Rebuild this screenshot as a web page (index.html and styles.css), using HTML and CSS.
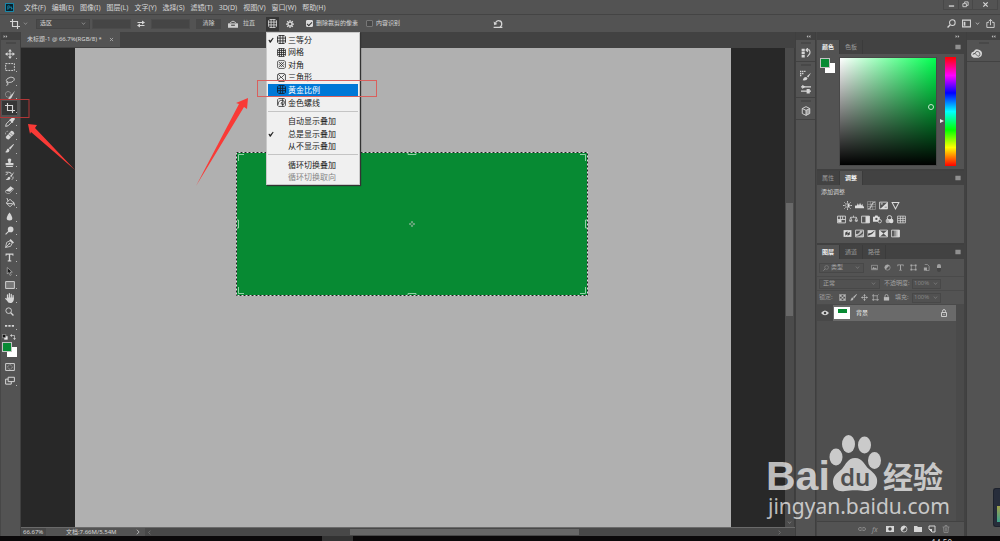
FILE: index.html
```html
<!DOCTYPE html>
<html lang="zh-CN">
<head>
<meta charset="utf-8">
<title>未标题-1 @ 66.7%(RGB/8)</title>
<link rel="stylesheet" href="styles.css">
</head>
<body>
<svg class="defs" aria-hidden="true">
  <symbol id="crop" viewBox="0 0 16 16"><path d="M4 0v12h12M0 4h12v12" fill="none" stroke="currentColor" stroke-width="1.8"/></symbol>
  <symbol id="chev" viewBox="0 0 16 16"><path d="M3 5l5 6 5-6" fill="none" stroke="currentColor" stroke-width="2.200"/></symbol>
  <symbol id="right" viewBox="0 0 16 16"><path d="M5 2l6 6-6 6" fill="none" stroke="currentColor" stroke-width="2"/></symbol>
  <symbol id="left" viewBox="0 0 16 16"><path d="M11 2L5 8l6 6" fill="none" stroke="currentColor" stroke-width="2"/></symbol>
  <symbol id="dright" viewBox="0 0 16 16"><path d="M2 3l5 5-5 5zM9 3l5 5-5 5z" fill="currentColor"/></symbol>
  <symbol id="dleft" viewBox="0 0 16 16"><path d="M7 3L2 8l5 5zM14 3L9 8l5 5z" fill="currentColor"/></symbol>
  <symbol id="swap" viewBox="0 0 16 16"><path d="M1 5h10M5 11h10" stroke="currentColor" stroke-width="2"/><path d="M10 1l6 4-6 4zM6 7l-6 4 6 4z" fill="currentColor"/></symbol>
  <symbol id="level" viewBox="0 0 16 16"><path d="M0 7h16v7H0z" fill="currentColor"/><path d="M3 7q5-7 10 0" fill="none" stroke="currentColor" stroke-width="1.5"/><path d="M5 9h6v2H5z" fill="#535353"/></symbol>
  <symbol id="grid" viewBox="0 0 16 16"><path d="M3 1h10l2 2v10l-2 2H3l-2-2V3zM5.500 0v16M10.500 0v16M0 5.500h16M0 10.500h16" fill="none" stroke="currentColor" stroke-width="1.500"/></symbol>
  <symbol id="mesh" viewBox="0 0 16 16"><path d="M3 1h10l2 2v10l-2 2H3l-2-2V3zM4.500 1v14M8 1v14M11.500 1v14M1 4.500h14M1 8h14M1 11.500h14" fill="none" stroke="currentColor" stroke-width="1.400"/></symbol>
  <symbol id="diag" viewBox="0 0 16 16"><path d="M3 1h10l2 2v10l-2 2H3l-2-2V3zM3 3l10 10M13 3L3 13M8 4l4 4-4 4-4-4z" fill="none" stroke="currentColor" stroke-width="1.200"/></symbol>
  <symbol id="tri" viewBox="0 0 16 16"><path d="M3 1h10l2 2v10l-2 2H3l-2-2V3zM2 2l12 12M8 8l6-6M2 12l5-5" fill="none" stroke="currentColor" stroke-width="1.300"/></symbol>
  <symbol id="golden" viewBox="0 0 16 16"><path d="M3 1h10l2 2v10l-2 2H3l-2-2V3zM6 0v16M10 0v16M0 6h16M0 10h16" fill="none" stroke="currentColor" stroke-width="1.700"/></symbol>
  <symbol id="spiral" viewBox="0 0 16 16"><path d="M3 1h10l2 2v10l-2 2H3l-2-2V3zM2 12Q2 4 9 4q5 0 4 5t-5 2q-2-2 1-4M10 1v14" fill="none" stroke="currentColor" stroke-width="1.300"/></symbol>
  <symbol id="gear" viewBox="0 0 16 16"><circle cx="8" cy="8" r="4.200" fill="none" stroke="currentColor" stroke-width="3"/><path d="M8 0v3M8 13v3M0 8h3M13 8h3M2.300 2.300l2 2M11.700 11.700l2 2M2.300 13.700l2-2M11.700 4.300l2-2" stroke="currentColor" stroke-width="2.500"/></symbol>
  <symbol id="reset" viewBox="0 0 16 16"><path d="M4 6q2-4 5-3.500 5 .5 5 5t-3 5" fill="none" stroke="currentColor" stroke-width="2"/><path d="M1 4l1 6 5-2zM1 12.500h14v2H1z" fill="currentColor"/></symbol>
  <symbol id="search" viewBox="0 0 16 16"><circle cx="9.500" cy="6.500" r="5" fill="none" stroke="currentColor" stroke-width="1.800"/><path d="M6 10l-5 5" stroke="currentColor" stroke-width="2.500"/></symbol>
  <symbol id="layout" viewBox="0 0 16 16"><path d="M1 2h14v12H1z" fill="none" stroke="currentColor" stroke-width="1.800"/><path d="M3 5h3v7H3z" fill="currentColor"/></symbol>
  <symbol id="share" viewBox="0 0 16 16"><path d="M5 6H1.500v9h13V6H11M8 11V1M4.500 4L8 1l3.500 3" fill="none" stroke="currentColor" stroke-width="1.600"/></symbol>
  <symbol id="min" viewBox="0 0 16 16"><path d="M2 10h12v3H2z" fill="currentColor"/></symbol>
  <symbol id="restore" viewBox="0 0 16 16"><path d="M2 6h8v7H2zM6 5V2h8v8h-4" fill="none" stroke="currentColor" stroke-width="2"/></symbol>
  <symbol id="close" viewBox="0 0 16 16"><path d="M3 3l10 10M13 3L3 13" stroke="currentColor" stroke-width="2.800"/></symbol>
  <symbol id="check" viewBox="0 0 16 16"><path d="M1 8l3-1 2 3 7-8 2 1-8 12H5z" fill="currentColor"/></symbol>
  <symbol id="move" viewBox="0 0 16 16"><path d="M8 2v12M2 8h12" stroke="currentColor" stroke-width="1.600"/><path d="M8 0l3 4H5zM8 16l3-4H5zM0 8l4-3v6zM16 8l-4-3v6z" fill="currentColor"/></symbol>
  <symbol id="marquee" viewBox="0 0 16 16"><path d="M1 2.500h14v11H1z" fill="none" stroke="currentColor" stroke-width="1.500" stroke-dasharray="3 1.500"/></symbol>
  <symbol id="lasso" viewBox="0 0 16 16"><path d="M4 10Q0 7 4 4q6-4 10-1 3 4-4 7-5 1-7-1-1 3 2 3 0 3-3 3" fill="none" stroke="currentColor" stroke-width="1.400"/></symbol>
  <symbol id="quick" viewBox="0 0 16 16"><circle cx="5" cy="7" r="4.500" fill="none" stroke="currentColor" stroke-dasharray="2 1"/><path d="M16 1L9 9l-4 5q5 1 6-3z" fill="currentColor"/></symbol>
  <symbol id="dropper" viewBox="0 0 16 16"><path d="M1 15l1-4 6-6 3 3-6 6z" fill="none" stroke="currentColor" stroke-width="1.500"/><path d="M7 4l2-1 3-3q3 0 4 3l-3 4v2h-2z" fill="currentColor"/></symbol>
  <symbol id="heal" viewBox="0 0 16 16"><path d="M1 11l9-10q4 0 5 5l-9 9q-4 0-5-4z" fill="currentColor"/><path d="M5 6l5 5M8 4l4 4M8 9l-1-1" stroke="#535353"/><path d="M1 7q-1-5 4-5" fill="none" stroke="currentColor" stroke-dasharray="2 1"/></symbol>
  <symbol id="brush" viewBox="0 0 16 16"><path d="M15 0L7 7l2 3 7-9zM6 8q-3 0-3 3-1 3-3 3 7 3 8-3z" fill="currentColor"/></symbol>
  <symbol id="stamp" viewBox="0 0 16 16"><path d="M6 7Q3 1 8 1t2 6v2h5v4H1V9h5zM2 14h12v2H2z" fill="currentColor"/></symbol>
  <symbol id="history" viewBox="0 0 16 16"><path d="M15 1L8 8l2 2zM7 9q-3 0-3 3l-3 2q6 2 8-3z" fill="currentColor"/><path d="M1 2h5q4 0 4 3M13 9q0 4-2 5M1 6l4-2" fill="none" stroke="currentColor" stroke-width="1.400"/></symbol>
  <symbol id="eraser" viewBox="0 0 16 16"><path d="M1 10l9-8 5 4-6 6z" fill="currentColor"/><path d="M1 10v3l3 2h4l7-7V6" fill="none" stroke="currentColor"/></symbol>
  <symbol id="bucket" viewBox="0 0 16 16"><path d="M2 8l6-6 6 6-6 6zM5 5L3 0M3 9h9" fill="none" stroke="currentColor" stroke-width="1.500"/><path d="M13 5q4 3 2 8-2-2-2-8z" fill="currentColor"/></symbol>
  <symbol id="drop" viewBox="0 0 16 16"><path d="M8 1q10 14 0 14T8 1z" fill="currentColor"/></symbol>
  <symbol id="dodge" viewBox="0 0 16 16"><circle cx="10" cy="6" r="5" fill="currentColor"/><path d="M7 9l-6 6" stroke="currentColor" stroke-width="2"/></symbol>
  <symbol id="pen" viewBox="0 0 16 16"><path d="M1 15l2-9 6-3 4 4-3 6zM1 15l6-6" fill="none" stroke="currentColor" stroke-width="1.500"/><circle cx="8" cy="8" r="1.500" fill="currentColor"/><path d="M10 0l6 6-2 2-6-6z" fill="currentColor"/></symbol>
  <symbol id="type" viewBox="0 0 16 16"><path d="M1 1h14v4h-1.500L13 3H9.200v10l2 .5V15H4.800v-1.500l2-.5V3H3l-.5 2H1z" fill="currentColor"/></symbol>
  <symbol id="arrow" viewBox="0 0 16 16"><path d="M4 1v11l3-2 2 5 2-1-2-5h4z" fill="#1c1c1c" stroke="currentColor"/></symbol>
  <symbol id="rect" viewBox="0 0 16 16"><path d="M1 2.500h14v11H1z" fill="#777" stroke="currentColor" stroke-width="1.500"/></symbol>
  <symbol id="hand" viewBox="0 0 16 16"><path d="M4 9V3M7 8V1M10 8V2M13 9V4" stroke="currentColor" stroke-width="2" stroke-linecap="round"/><path d="M3 7h11v4q-1 5-6 5-3 0-5-4L0 9q1-2 3 0z" fill="currentColor"/></symbol>
  <symbol id="zoom" viewBox="0 0 16 16"><circle cx="6.500" cy="6.500" r="5" fill="none" stroke="currentColor" stroke-width="1.600"/><path d="M10 10l5 5" stroke="currentColor" stroke-width="2.500"/></symbol>
  <symbol id="dots" viewBox="0 0 16 16"><path d="M0 7h4v3H0zM6 7h4v3H6zM12 7h4v3h-4z" fill="currentColor"/></symbol>
  <symbol id="defcol" viewBox="0 0 16 16"><path d="M6 6h9v9H6z" fill="#eee"/><path d="M1 1h9v9H1z" fill="#111" stroke="#ccc" stroke-width="1.500"/></symbol>
  <symbol id="swapcol" viewBox="0 0 16 16"><path d="M3 4h9v9" fill="none" stroke="currentColor" stroke-width="1.800"/><path d="M5 0v8L0 4zM8 11h8l-4 5z" fill="currentColor"/></symbol>
  <symbol id="mask" viewBox="0 0 16 16"><path d="M1 2.500h14v11H1z" fill="none" stroke="currentColor" stroke-width="1.500"/><circle cx="8" cy="8" r="3.500" fill="none" stroke="currentColor" stroke-dasharray="1.500 1"/></symbol>
  <symbol id="screen" viewBox="0 0 16 16"><path d="M5 2h10v7H5zM5 5H1v8h9V9" fill="none" stroke="currentColor" stroke-width="1.600"/></symbol>
  <symbol id="panelhist" viewBox="0 0 16 16"><path d="M1 1h5v4H1zM1 6h5v4H1zM1 11h5v4H1z" fill="currentColor"/><path d="M9 3h4q2 2 1 6l-4 5M11 0L8 3l3 3" fill="none" stroke="currentColor" stroke-width="1.800"/></symbol>
  <symbol id="presets" viewBox="0 0 16 16"><path d="M0 1h2v2H0zM3 1h2v2H3zM6 1h2v2H6zM0 4h2v2H0zM3 4h2v2H3zM0 7h2v2H0zM16 4l-6 5 2 2zM9 10q-4 0-5 5 6 1 7-3z" fill="currentColor"/></symbol>
  <symbol id="sliders" viewBox="0 0 16 16"><path d="M0 4.500h16M0 11.500h16" stroke="currentColor" stroke-width="2"/><path d="M2 1l5 3.500L2 8zM9 8h5v7H9z" fill="currentColor"/></symbol>
  <symbol id="cube" viewBox="0 0 16 16"><path d="M8 1l6 3v8l-6 3-6-3V4zM2 4l6 3 6-3M8 7v8" fill="none" stroke="currentColor" stroke-width="1.500"/><path d="M8 7l6-3v8l-6 3z" fill="currentColor" opacity=".6"/></symbol>
  <symbol id="cc" viewBox="0 0 16 16"><path d="M4 14Q0 13 0 9.500 0 6 4 5q2-4 6-3 6 1 6 6t-5 6z" fill="currentColor"/><path d="M3 10q0-3 3-2l4 4q3 0 3-3t-3-4-5 4" fill="none" stroke="#535353" stroke-width="1.200"/></symbol>
  <symbol id="sun" viewBox="0 0 16 16"><circle cx="8" cy="8" r="3.500" fill="none" stroke="currentColor"/><path d="M8 4.500a3.500 3.500 0 010 7z" fill="currentColor"/><path d="M8 0v3M8 13v3M0 8h3M13 8h3M2.500 2.500l2 2M11.500 11.500l2 2M2.500 13.500l2-2M11.500 4.500l2-2" stroke="currentColor" stroke-width="1.500"/></symbol>
  <symbol id="levels" viewBox="0 0 16 16"><path d="M0 13V9l2-2 1 2 2-5 2 4 2-5 2 5 2-3 1 4 2 1v3z" fill="currentColor"/></symbol>
  <symbol id="curves" viewBox="0 0 16 16"><path d="M1 1h14v14H1zM1 6h14M1 10h14M6 1v14M10 1v14" fill="none" stroke="currentColor" opacity=".6"/><path d="M2 14Q8 13 8 8t6-6" fill="none" stroke="currentColor" stroke-width="1.500"/></symbol>
  <symbol id="expo" viewBox="0 0 16 16"><path d="M1 2h14v12H1z" fill="none" stroke="currentColor" stroke-width="1.500"/><path d="M15 2v12H2z" fill="currentColor"/><path d="M3 5h4M5 3v4" stroke="currentColor"/><path d="M10 11h4" stroke="#444"/></symbol>
  <symbol id="vib" viewBox="0 0 16 16"><path d="M2 2.500h12L8 14z" fill="none" stroke="currentColor" stroke-width="1.800"/></symbol>
  <symbol id="hue" viewBox="0 0 16 16"><path d="M1 2h14v12H1zM1 8h14M6 2v6M10 2v6" fill="none" stroke="currentColor" stroke-width="1.500"/><path d="M2 9h6v4H2z" fill="currentColor"/></symbol>
  <symbol id="scale" viewBox="0 0 16 16"><path d="M3 4h10M8 1v3M3 4l-2 6h4zM13 4l-2 6h4z" fill="none" stroke="currentColor" stroke-width="1.300"/><path d="M0 10h6q-3 4-6 0zM10 10h6q-3 4-6 0z" fill="currentColor"/></symbol>
  <symbol id="bw" viewBox="0 0 16 16"><path d="M1 2h14v12H1z" fill="none" stroke="currentColor" stroke-width="1.500"/><path d="M8 2h7v12H8z" fill="currentColor"/></symbol>
  <symbol id="photo" viewBox="0 0 16 16"><path d="M0 3h3l1-2h4l1 2h3v9H0z" fill="currentColor"/><circle cx="6" cy="7" r="2" fill="#535353"/><circle cx="12" cy="11" r="3" fill="#535353" stroke="currentColor" stroke-width="1.400"/></symbol>
  <symbol id="mixer" viewBox="0 0 16 16"><circle cx="8" cy="5" r="4" fill="none" stroke="currentColor" stroke-width="1.600"/><circle cx="5" cy="10.500" r="4" fill="currentColor" opacity=".7"/><circle cx="11" cy="10.500" r="4" fill="currentColor"/></symbol>
  <symbol id="table" viewBox="0 0 16 16"><path d="M1 2h14v12H1zM1 6h14M1 10h14M6 2v12M10.500 2v12" fill="none" stroke="currentColor" stroke-width="1.300"/></symbol>
  <symbol id="invert" viewBox="0 0 16 16"><path d="M1 2h14v12H1z" fill="currentColor"/><path d="M4 12V6l4-2v4l4-3v5l-4 2V9z" fill="#444"/></symbol>
  <symbol id="poster" viewBox="0 0 16 16"><path d="M1 2h14v12H1z" fill="none" stroke="currentColor" stroke-width="1.500"/><path d="M1 9Q8 9 9 3h5Q12 9 2 13z" fill="currentColor" opacity=".8"/><path d="M5 14l10-6v6z" fill="currentColor" opacity=".6"/></symbol>
  <symbol id="thresh" viewBox="0 0 16 16"><path d="M1 2h14v12H1z" fill="currentColor"/><path d="M2 8l5-1 6-4h1L9 9l-7 3z" fill="#444"/></symbol>
  <symbol id="sel" viewBox="0 0 16 16"><path d="M1 2h14v12H1z" fill="none" stroke="currentColor" stroke-width="1.500"/><path d="M1 2l7 6 7-6v12L8 8l-7 6z" fill="currentColor"/></symbol>
  <symbol id="gradmap" viewBox="0 0 16 16"><path d="M1 2h14v12H1z" fill="none" stroke="currentColor" stroke-width="1.500"/><path d="M5 2h3v12H5z" fill="currentColor" opacity=".4"/><path d="M8 2h3v12H8z" fill="currentColor" opacity=".7"/><path d="M11 2h4v12h-4z" fill="currentColor"/></symbol>
  <symbol id="image" viewBox="0 0 16 16"><path d="M1 3h14v10H1z" fill="none" stroke="currentColor" stroke-width="1.500"/><path d="M2 12l4-6 3 4 2-2 3 4z" fill="currentColor"/></symbol>
  <symbol id="half" viewBox="0 0 16 16"><circle cx="8" cy="8" r="6" fill="none" stroke="currentColor" stroke-width="1.500"/><path d="M3.700 12.300a6 6 0 018.600-8.600z" fill="currentColor"/></symbol>
  <symbol id="shape" viewBox="0 0 16 16"><path d="M3 3h10v10H3z" fill="none" stroke="currentColor" stroke-width="1.500"/><path d="M1 1h4v4H1zM11 1h4v4h-4zM1 11h4v4H1zM11 11h4v4h-4z" fill="currentColor"/></symbol>
  <symbol id="smart" viewBox="0 0 16 16"><path d="M4 1h6l4 4v10H7" fill="none" stroke="currentColor" stroke-width="1.500"/><path d="M2 8h7v7H2z" fill="currentColor"/></symbol>
  <symbol id="checker" viewBox="0 0 16 16"><path d="M1 1h14v14H1z" fill="none" stroke="currentColor" stroke-width="1.500"/><path d="M2 2h4v4H2zM10 2h4v4h-4zM6 6h4v4H6zM2 10h4v4H2zM10 10h4v4h-4z" fill="currentColor"/></symbol>
  <symbol id="board" viewBox="0 0 16 16"><path d="M3 0v16M0 4h12l3-3M12 4v12M0 13h16" fill="none" stroke="currentColor" stroke-width="1.500"/></symbol>
  <symbol id="lock" viewBox="0 0 16 16"><path d="M2 7h12v8H2z" fill="currentColor"/><path d="M4.500 7V5q0-4 3.500-4t3.500 4v2" fill="none" stroke="currentColor" stroke-width="1.800"/></symbol>
  <symbol id="olock" viewBox="0 0 16 16"><path d="M3 7h10v8H3zM5 7V5q0-4 3-4t3 4v2M8 10v2" fill="none" stroke="currentColor" stroke-width="2"/></symbol>
  <symbol id="eye" viewBox="0 0 16 16"><path d="M0 8q8-10 16 0-8 9-16 0z" fill="currentColor"/><circle cx="8" cy="8" r="2.500" fill="#444"/></symbol>
  <symbol id="link" viewBox="0 0 16 16"><path d="M7 5H4q-3 0-3 3t3 3h3M9 5h3q3 0 3 3t-3 3H9M5 8h6" fill="none" stroke="currentColor" stroke-width="1.600"/></symbol>
  <symbol id="lmask" viewBox="0 0 16 16"><path d="M0 2h16v12H0z" fill="currentColor"/><circle cx="8" cy="8" r="3.500" fill="#444"/></symbol>
  <symbol id="folder" viewBox="0 0 16 16"><path d="M0 2h6l2 2h8v10H0z" fill="currentColor"/></symbol>
  <symbol id="new" viewBox="0 0 16 16"><path d="M2 2h12v12H8L2 8z" fill="none" stroke="currentColor" stroke-width="2"/><path d="M2 8h6v6z" fill="currentColor"/></symbol>
  <symbol id="trash" viewBox="0 0 16 16"><path d="M1 4h14M6 4V1h4v3M3 4l1 11h8l1-11M6.500 6v7M9.500 6v7" fill="none" stroke="currentColor" stroke-width="1.500"/></symbol>
  <symbol id="list" viewBox="0 0 16 16"><path d="M1 2h14v12H1z" fill="currentColor"/></symbol>
</svg>

<header class="menubar">
  <svg class="ps" viewBox="0 0 16 16" role="img" aria-label="Ps"><rect x="1" y="1" width="14" height="14" fill="#07202c" stroke="#1690b5" stroke-width="1.600"/><path d="M5 12V5h2q2 0 2 2T7 9H5M12.500 7.500q-2-1-2 .5t2 1.500-2 1.500" fill="none" stroke="#20a8d2" stroke-width="1.200"/></svg>
  <nav class="menus">
    <button>文件(F)</button><button>编辑(E)</button><button>图像(I)</button><button>图层(L)</button><button>文字(Y)</button><button>选择(S)</button><button>滤镜(T)</button><button>3D(D)</button><button>视图(V)</button><button>窗口(W)</button><button>帮助(H)</button>
  </nav>
  <div class="winctl">
    <button aria-label="最小化"><svg class="i7"><use href="#min"/></svg></button>
    <button aria-label="还原"><svg class="i7"><use href="#restore"/></svg></button>
    <button class="wide" aria-label="关闭"><svg class="i7"><use href="#close"/></svg></button>
  </div>
</header>

<section class="options">
  <button class="current" aria-label="裁剪工具"><svg class="i10"><use href="#crop"/></svg><svg class="i5"><use href="#chev"/></svg></button>
  <div class="ratio">
    <div class="pick wide"><select aria-label="预设"><option>选区</option></select><svg class="i5"><use href="#chev"/></svg></div>
    <input class="num" type="text" aria-label="宽度">
  </div>
  <button class="plain" aria-label="互换"><svg class="i8"><use href="#swap"/></svg></button>
  <input class="num" type="text" aria-label="高度">
  <button class="clear">清除</button>
  <button class="straight"><svg class="i10"><use href="#level"/></svg>拉直</button>
  <div class="overlay">
    <button class="gridbtn" aria-label="叠加选项"><svg class="i9"><use href="#grid"/></svg></button>
    <div class="dropdown" role="menu">
      <button><svg class="i6"><use href="#check"/></svg><svg class="i9"><use href="#grid"/></svg>三等分</button>
      <button><i></i><svg class="i9"><use href="#mesh"/></svg>网格</button>
      <button><i></i><svg class="i9"><use href="#diag"/></svg>对角</button>
      <button><i></i><svg class="i9"><use href="#tri"/></svg>三角形</button>
      <button class="hot"><i></i><svg class="i9"><use href="#golden"/></svg>黄金比例</button>
      <button><i></i><svg class="i9"><use href="#spiral"/></svg>金色螺线</button>
      <hr>
      <button><i></i><i></i>自动显示叠加</button>
      <button><svg class="i6"><use href="#check"/></svg><i></i>总是显示叠加</button>
      <button><i></i><i></i>从不显示叠加</button>
      <hr>
      <button><i></i><i></i>循环切换叠加</button>
      <button disabled><i></i><i></i>循环切换取向</button>
    </div>
  </div>
  <button class="plain gear" aria-label="设置"><svg class="i8"><use href="#gear"/></svg></button>
  <label class="tick"><input type="checkbox" checked>删除裁剪的像素</label>
  <label class="tick"><input type="checkbox">内容识别</label>
  <button class="plain reset" aria-label="复位"><svg class="i10"><use href="#reset"/></svg></button>
  <div class="optright">
    <button class="plain" aria-label="搜索"><svg class="i9"><use href="#search"/></svg></button>
    <button class="plain duo" aria-label="工作区"><svg class="i9"><use href="#layout"/></svg><svg class="i5"><use href="#chev"/></svg></button>
    <button class="plain" aria-label="共享"><svg class="i9"><use href="#share"/></svg></button>
  </div>
</section>

<main class="work">
  <aside class="tools">
    <div class="strip start"><svg class="i5"><use href="#dright"/></svg></div>
    <div class="grip"></div>
    <div class="toollist">
      <button aria-label="移动"><svg class="i10"><use href="#move"/></svg></button>
      <button aria-label="选框"><svg class="i10"><use href="#marquee"/></svg></button>
      <button aria-label="套索"><svg class="i10"><use href="#lasso"/></svg></button>
      <button aria-label="快速选择"><svg class="i10"><use href="#quick"/></svg></button>
      <button class="on" aria-label="裁剪"><svg class="i10"><use href="#crop"/></svg></button>
      <button aria-label="吸管"><svg class="i10"><use href="#dropper"/></svg></button>
      <button aria-label="修复"><svg class="i10"><use href="#heal"/></svg></button>
      <button aria-label="画笔"><svg class="i9"><use href="#brush"/></svg></button>
      <button aria-label="图章"><svg class="i9"><use href="#stamp"/></svg></button>
      <button aria-label="历史记录画笔"><svg class="i10"><use href="#history"/></svg></button>
      <button aria-label="橡皮擦"><svg class="i9"><use href="#eraser"/></svg></button>
      <button aria-label="油漆桶"><svg class="i10"><use href="#bucket"/></svg></button>
      <button aria-label="模糊"><svg class="i9"><use href="#drop"/></svg></button>
      <button aria-label="减淡"><svg class="i9"><use href="#dodge"/></svg></button>
      <button aria-label="钢笔"><svg class="i9"><use href="#pen"/></svg></button>
      <button aria-label="文字"><svg class="i9"><use href="#type"/></svg></button>
      <button aria-label="路径选择"><svg class="i9"><use href="#arrow"/></svg></button>
      <button aria-label="矩形"><svg class="i10"><use href="#rect"/></svg></button>
      <button aria-label="抓手"><svg class="i10"><use href="#hand"/></svg></button>
      <button class="single" aria-label="缩放"><svg class="i9"><use href="#zoom"/></svg></button>
      <button aria-label="更多"><svg class="i9"><use href="#dots"/></svg></button>
    </div>
    <div class="colmini"><svg class="i6"><use href="#defcol"/></svg><svg class="i6"><use href="#swapcol"/></svg></div>
    <div class="swatch"><span class="bg"></span><span class="fg"></span></div>
    <div class="modes">
      <button class="single" aria-label="快速蒙版"><svg class="i10"><use href="#mask"/></svg></button>
      <button aria-label="屏幕模式"><svg class="i10"><use href="#screen"/></svg></button>
    </div>
  </aside>

  <section class="doc">
    <div class="tabs"><div class="tab">未标题-1 @ 66.7%(RGB/8) * <button class="plain" aria-label="关闭文档"><svg class="i5"><use href="#close"/></svg></button></div></div>
    <div class="stage">
      <div class="canvas">
        <svg class="selection" viewBox="0 0 352 144">
          <rect x="0.500" y="0.500" width="351" height="143" fill="#078a33" stroke="#dedede"/>
          <rect x="0.500" y="0.500" width="351" height="143" fill="none" stroke="#222" stroke-dasharray="2 2"/>
          <path d="M2.500 9V2.500H8M344 2.500h5.500V9M2.500 135v6.500H8M344 141.500h5.500V135M172 1v1.500h8V1M172 143v-1.500h8V143M1 68h1.500v8H1M351 68h-1.500v8h1.500" fill="none" stroke="#8fd0a4"/>
          <path d="M176 69v2M176 73v2M173 72h2M177 72h2" stroke="#a7c9b0"/><circle cx="176" cy="72" r="1.500" fill="none" stroke="#6fa380"/>
        </svg>
      </div>
    </div>
    <div class="vscroll"><span></span><svg class="i5"><use href="#chev"/></svg></div>
    <footer class="status">
      <span class="pct">66.67%</span>
      <span class="info">文档:7.66M/5.54M</span>
      <svg class="i6"><use href="#right"/></svg>
      <div class="hscroll"><svg class="i5"><use href="#left"/></svg><span></span><svg class="i5"><use href="#right"/></svg></div>
    </footer>
  </section>

  <aside class="dock">
    <div class="strip"><svg class="i5"><use href="#dleft"/></svg></div>
    <div class="group"><div class="grip"></div><button aria-label="历史记录"><svg class="i10"><use href="#panelhist"/></svg></button></div>
    <div class="group"><div class="grip"></div><button aria-label="画笔预设"><svg class="i11"><use href="#presets"/></svg></button><button aria-label="画笔设置"><svg class="i10"><use href="#sliders"/></svg></button></div>
    <div class="group"><div class="grip"></div><button aria-label="3D"><svg class="i10"><use href="#cube"/></svg></button></div>
  </aside>

  <aside class="panels">
    <div class="strip"><svg class="i5"><use href="#dright"/></svg></div>
    <section class="panel">
      <div class="ptabs"><button class="on">颜色</button><button>色板</button><svg class="i6 pmenu"><use href="#list"/></svg></div>
      <div class="color">
        <div class="swatch"><span class="bg"></span><span class="fg"></span></div>
        <div class="field"><span class="ring"></span></div>
        <div class="hue"><span class="ptr"></span></div>
      </div>
    </section>
    <section class="panel">
      <div class="ptabs"><button>属性</button><button class="on">调整</button><svg class="i6 pmenu"><use href="#list"/></svg></div>
      <div class="adjust">
        <p>添加调整</p>
        <div class="adj"><svg class="i9"><use href="#sun"/></svg><svg class="i9"><use href="#levels"/></svg><svg class="i9"><use href="#curves"/></svg><svg class="i9"><use href="#expo"/></svg><svg class="i9"><use href="#vib"/></svg></div>
        <div class="adj"><svg class="i9"><use href="#hue"/></svg><svg class="i9"><use href="#scale"/></svg><svg class="i9"><use href="#bw"/></svg><svg class="i9"><use href="#photo"/></svg><svg class="i9"><use href="#mixer"/></svg><svg class="i9"><use href="#table"/></svg></div>
        <div class="adj"><svg class="i9"><use href="#invert"/></svg><svg class="i9"><use href="#poster"/></svg><svg class="i9"><use href="#thresh"/></svg><svg class="i9"><use href="#sel"/></svg><svg class="i9"><use href="#gradmap"/></svg></div>
      </div>
    </section>
    <section class="panel layers">
      <div class="ptabs"><button class="on">图层</button><button>通道</button><button>路径</button><svg class="i6 pmenu"><use href="#list"/></svg></div>
      <div class="lrow filter">
        <div class="pick kind"><svg class="i6"><use href="#search"/></svg><select aria-label="类型"><option>类型</option></select><svg class="i5"><use href="#chev"/></svg></div>
        <div class="ficons"><svg class="i7"><use href="#image"/></svg><svg class="i7"><use href="#half"/></svg><svg class="i7"><use href="#type"/></svg><svg class="i7"><use href="#shape"/></svg><svg class="i7"><use href="#smart"/></svg><span class="toggle"></span></div>
      </div>
      <div class="lrow">
        <div class="pick blend"><select aria-label="混合模式"><option>正常</option></select><svg class="i5"><use href="#chev"/></svg></div>
        <label class="amount" for="opacity">不透明度:</label><div class="pick pctbox"><input id="opacity" type="text" value="100%"><svg class="i5"><use href="#chev"/></svg></div>
      </div>
      <div class="lrow">
        <span class="lk">锁定:</span>
        <div class="locks"><svg class="i7"><use href="#checker"/></svg><svg class="i7"><use href="#brush"/></svg><svg class="i7"><use href="#move"/></svg><svg class="i7"><use href="#board"/></svg><svg class="i7"><use href="#lock"/></svg></div>
        <label class="amount" for="fill">填充:</label><div class="pick pctbox"><input id="fill" type="text" value="100%"><svg class="i5"><use href="#chev"/></svg></div>
      </div>
      <div class="llist">
        <div class="layer"><span class="vis"><svg class="i8"><use href="#eye"/></svg></span><div class="lbody"><span class="thumb"><i></i></span><span>背景</span><svg class="i8"><use href="#olock"/></svg></div></div>
        <div class="lbar"></div>
      </div>
      <div class="lfoot"><svg class="i8 dim"><use href="#link"/></svg><em>fx</em><svg class="i8"><use href="#lmask"/></svg><svg class="i8"><use href="#half"/></svg><svg class="i8"><use href="#folder"/></svg><svg class="i8"><use href="#new"/></svg><svg class="i8 dim"><use href="#trash"/></svg></div>
    </section>
  </aside>

  <aside class="libs">
    <div class="strip"><svg class="i5"><use href="#dleft"/></svg></div>
    <div class="group"><div class="grip"></div><button aria-label="库"><svg class="i11"><use href="#cc"/></svg></button></div>
    <div class="meter"><span></span></div>
  </aside>
</main>
<footer class="taskbar"><span class="app"></span><time>14:50</time></footer>

<svg class="notes" viewBox="0 0 400 200" aria-hidden="true">
  <rect x="0" y="99.500" width="29" height="18" fill="none" stroke="#b03636"/>
  <path d="M28 124l9 1-2 3 40 42-44-38-1 2z" fill="#f93a36"/>
  <rect x="257.500" y="80.500" width="119" height="16" fill="none" stroke="#d9605d"/>
  <path d="M248 98l-1 11-3-2-48 79 43-82-3-1z" fill="#f93a36"/>
</svg>
<svg class="mark" viewBox="0 0 184 88" aria-hidden="true">
  <g fill="#fff" fill-opacity=".7">
    <text class="bai" x="0" y="58">Bai</text>
    <ellipse cx="70" cy="25" rx="6.500" ry="8.500"/><ellipse cx="82.500" cy="12" rx="6.500" ry="9"/><ellipse cx="98.500" cy="13" rx="6.500" ry="8.500"/><ellipse cx="108.500" cy="28.500" rx="6.500" ry="8.500"/>
    <path d="M89 26c8 0 9 7 14 11 6 5 9 8 8 14-1 7-7 8-12 8-6-1-14-1-20 0-6 1-12-1-12-9 0-6 4-9 9-13 4-5 6-11 13-11z"/>
    <text class="cn" x="117" y="56">经验</text>
    <text class="url" x="2" y="82">jingyan.baidu.com</text>
  </g>
  <text class="du" x="74" y="54">du</text>
</svg>
</body>
</html>
```
FILE: styles.css
```css
* { box-sizing: border-box; }
html, body { height: 100%; }
body {
  margin: 0;
  display: flex;
  flex-direction: column;
  position: relative;
  overflow: hidden;
  background: #535353;
  color: #d6d6d6;
  font: 6px/9px "Noto Sans", "Noto Sans CJK SC", sans-serif;
}
button, input, select {
  font: inherit;
  color: inherit;
  background: none;
  border: 0;
  padding: 0;
  margin: 0;
  border-radius: 0;
  outline: 0;
}
select { appearance: none; flex: 1; min-width: 0; }
svg { flex: none; display: block; }
.defs { position: absolute; width: 0; height: 0; }
.i5 { width: 5px; height: 5px; }
.i6 { width: 6px; height: 6px; }
.i7 { width: 7px; height: 7px; }
.i8 { width: 8px; height: 8px; }
.i9 { width: 9px; height: 9px; }
.i10 { width: 10px; height: 10px; }
.i11 { width: 11px; height: 11px; }
.dim { color: #909090; }
.plain { display: flex; align-items: center; }

/* menu bar */
.menubar {
  flex: none;
  height: 15px;
  display: flex;
  align-items: center;
  padding-left: 5px;
  border-bottom: 1px solid #444;
}
.ps { width: 9px; height: 9px; }
.menus { display: flex; gap: 6px; margin-left: 10px; font-size: 7px; }
.winctl { margin-left: auto; margin-right: 2px; align-self: flex-start; display: flex; height: 10px; border: 1px solid #484848; border-top: 0; }
.winctl button { width: 14px; display: grid; place-items: center; }
.winctl button + button { border-left: 1px solid #484848; }
.winctl .wide { width: 25px; }

/* tool options */
.options {
  flex: none;
  height: 17px;
  display: flex;
  align-items: center;
  padding: 0 5px 0 10px;
}
.current { display: flex; align-items: center; gap: 3px; width: 26px; }
.current .i5 { color: #a5a5a5; }
.ratio { display: flex; gap: 2px; margin-right: 6px; }
.pick {
  display: flex;
  align-items: center;
  height: 10px;
  padding: 0 3px;
  border: 1px solid #444;
  background: #4a4a4a;
}
.pick.wide { width: 54px; }
.pick svg { color: #a5a5a5; }
.num { width: 39px; height: 10px; background: #454545; border: 1px solid #4b4b4b; }
.options > .num { margin-left: 6px; }
.clear { margin-left: 6px; width: 25px; height: 10px; background: #484848; }
.straight { display: flex; align-items: center; gap: 5px; margin-left: 7px; width: 38px; color: #cfcfcf; }
.overlay { position: relative; }
.gridbtn { width: 13px; height: 14px; background: #363636; display: grid; place-items: center; }
.gear { margin-left: 7px; width: 20px; }
.tick { display: flex; align-items: center; gap: 3px; margin-right: 8px; }
.tick input { appearance: none; width: 7px; height: 7px; border: 1px solid #777; border-radius: 1px; background: #474747; display: grid; place-items: center; }
.tick input:checked { background: #dadada; border-color: #dadada; }
.tick input:checked::after { content: ""; width: 4px; height: 2px; border-left: 1px solid #333; border-bottom: 1px solid #333; transform: rotate(-45deg); }
.reset { margin-left: 85px; }
.optright { margin-left: auto; display: flex; gap: 6px; }
.duo { gap: 4px; }

.dropdown {
  position: absolute;
  z-index: 5;
  left: 0;
  top: 15px;
  width: 94px;
  height: 153px;
  display: flex;
  flex-direction: column;
  padding: 1px 1px 0;
  background: #f0f0f0;
  border: 1px solid #c9c9c9;
  box-shadow: 1px 1px 1px #333;
  color: #222;
  font-size: 8px;
}
.dropdown button { flex: 1; display: grid; grid-template-columns: 9px 11px 1fr; align-items: center; text-align: left; color: #222; line-height: 10px; white-space: nowrap; }
.dropdown .hot { background: #0078d7; color: #fff; }
.dropdown .hot svg { color: #10263a; }
.dropdown button:disabled { color: #868686; }
.dropdown hr { flex: none; width: 90px; height: 1px; margin: 2px 0 3px; border: 0; background: #c4c4c4; }

/* workspace */
.work { flex: 1; min-height: 0; display: grid; grid-template-columns: 21px 1fr 21px 150px 34px; }
.strip { flex: none; height: 8px; background: #424242; display: flex; align-items: center; justify-content: flex-end; padding: 0 4px; color: #b5b5b5; }
.strip.start { justify-content: flex-start; padding: 0 2px; }
.grip { width: 10px; height: 2px; margin: 2px auto; background: #484848; flex: none; }

.tools { display: flex; flex-direction: column; border-left: 1px solid #474747; border-right: 1px solid #404040; }
.toollist { height: 285px; margin-top: 1px; display: flex; flex-direction: column; }
.toollist button, .modes button { position: relative; flex: 1; display: grid; place-items: center; margin: 0 3px 0 1px; }
.toollist button::after, .modes button::after { content: ""; position: absolute; right: 0; bottom: 2px; width: 1px; height: 1px; background: #b5b5b5; }
.toollist .single::after, .modes .single::after { display: none; }
.toollist .on { background: #363636; }
.colmini { display: flex; justify-content: space-between; padding: 2px 4px 2px 1px; }
.swatch { display: grid; width: 15px; height: 15px; margin-left: 1px; }
.swatch span { grid-area: 1 / 1; width: 10px; height: 10px; }
.swatch .fg { background: #078a33; border: 1px solid #c2c2c2; }
.swatch .bg { background: #fff; justify-self: end; align-self: end; }
.modes { display: flex; flex-direction: column; height: 28px; margin-top: 3px; }

.doc { display: grid; grid-template: 16px minmax(0, 1fr) 9px / minmax(0, 1fr) 10px; background: #424242; min-width: 0; }
.tabs { grid-column: 1 / -1; display: flex; }
.tab { display: flex; align-items: center; gap: 6px; padding: 0 6px; margin-bottom: 1px; background: #535353; white-space: pre; }
.tab svg { color: #aaa; }
.stage { background: #282828; display: grid; padding: 0 54px; }
.canvas { position: relative; background: #b0b0b0; }
.selection { position: absolute; left: 161px; top: 104px; width: 352px; height: 144px; }
.vscroll { display: flex; flex-direction: column; align-items: center; justify-content: space-between; background: #4b4b4b; border-right: 1px solid #3d3d3d; padding: 155px 0 2px; color: #8d8d8d; }
.vscroll span { width: 7px; height: 35%; background: #686868; }
.status { grid-column: 1 / -1; display: flex; align-items: center; background: #535353; border-top: 1px solid #6a6a6a; line-height: 8px; white-space: nowrap; }
.pct { width: 25px; padding-left: 2px; background: #484848; }
.info { width: 89px; padding-left: 20px; }
.hscroll { flex: 1; height: 8px; margin-left: 4px; padding: 0 13px 0 2px; display: flex; align-items: center; justify-content: space-between; background: #484848; color: #858585; }
.hscroll span { width: 36%; height: 6px; background: #676767; }

.dock, .libs { display: flex; flex-direction: column; border-left: 1px solid #3f3f3f; border-right: 1px solid #3f3f3f; }
.libs { border-right: 0; }
.group { border-bottom: 1px solid #424242; padding-bottom: 1px; }
.group button { display: grid; place-items: center; width: 19px; height: 14px; }

/* panels */
.panels { display: flex; flex-direction: column; min-height: 0; border-right: 2px solid #424242; border-left: 1px solid #464646; }
.panel { border-bottom: 2px solid #404040; }
.ptabs { display: flex; height: 14px; background: #424242; color: #9a9a9a; }
.ptabs button { width: 23px; border-right: 1px solid #3b3b3b; }
.ptabs .on { background: #535353; color: #f0f0f0; font-weight: bold; }
.pmenu { margin: 4px 3px 0 auto; color: #909090; }
.color { display: flex; padding: 3px 0; height: 115px; }
.color .swatch { margin: 1px 4px 0 3px; }
.field {
  width: 98px;
  position: relative;
  background: linear-gradient(to top, #000, transparent), linear-gradient(to right, #fff, #00ff50);
  border: 1px solid #484848;
}
.ring { position: absolute; left: 95%; top: 46%; width: 6px; height: 6px; margin-left: -3px; margin-top: -3px; border: 1px solid #c5e8cf; border-radius: 50%; }
.hue { position: relative; width: 11px; margin-left: 8px; background: linear-gradient(#f00, #f0f 17%, #00f 33%, #0ff 50%, #0f0 67%, #ff0 83%, #f00); }
.ptr { position: absolute; left: -5px; top: 59%; margin-top: -2px; border: solid transparent; border-width: 2px 0 2px 4px; border-left-color: #eee; }
.adjust { height: 58px; padding-left: 4px; }
.adjust p { margin: 0 0 1px; padding-top: 3px; line-height: 9px; color: #d2d2d2; }
.adj { display: flex; justify-content: center; gap: 3px; width: 74px; height: 14px; margin-left: 13px; align-items: center; color: #dcdcdc; }
.layers { flex: 1; min-height: 0; display: flex; flex-direction: column; border-bottom: 0; }
.layers .ptabs { flex: none; }
.lrow { flex: none; display: flex; align-items: center; height: 14px; padding-left: 2px; border-bottom: 1px solid #4a4a4a; color: #a2a2a2; }
.lrow.filter { height: 18px; }
.lrow .pick { background: #515151; border-color: #484848; }
.lrow .pick svg { color: #858585; }
.kind { width: 45px; gap: 2px; }
.blend { width: 61px; }
.ficons { display: flex; gap: 6px; margin-left: 7px; color: #a8a8a8; }
.toggle { width: 4px; height: 8px; border-top: 4px solid #a0a0a0; border-radius: 2px; background: #454545; margin-left: 1px; }
.amount { margin-left: 4px; width: 28px; white-space: nowrap; }
.pctbox { width: 29px; padding: 0 2px 0 1px; gap: 1px; }
.pctbox input { flex: 1; min-width: 0; width: 16px; height: 8px; color: #868686; }
.lk { width: 20px; color: #9a9a9a; }
.locks { display: flex; gap: 4px; color: #b8b8b8; width: 52px; }
.locks + .amount { width: 17px; margin-left: 4px; }
.llist { flex: 1; display: grid; grid-template-columns: 1fr 8px; align-items: start; background: #4f4f4f; border-bottom: 1px solid #424242; }
.lbar { height: 100%; background: #4a4a4a; }
.layer { display: flex; height: 16px; }
.vis { width: 16px; display: grid; place-items: center; background: #484848; }
.lbody { flex: 1; display: flex; align-items: center; padding: 0 8px 0 1px; gap: 6px; background: #6a6a6a; color: #f2f2f2; }
.lbody svg { margin-left: auto; color: #ccc; }
.thumb { width: 16px; height: 12px; padding: 2px 3px; background: #fff; }
.thumb i { display: block; width: 9px; height: 4px; margin-left: 1px; background: #078a33; }
.lfoot { flex: none; display: flex; align-items: center; justify-content: flex-end; gap: 6px; height: 14px; padding-right: 14px; }
.lfoot em { width: 8px; color: #999; font-size: 7px; }

.libs { position: relative; }
.meter { position: absolute; right: 0; bottom: 9px; width: 7px; height: 39px; padding: 17px 0 4px 3px; background: #272d3b; border: 1px solid #1d222d; border-right: 0; border-radius: 3px 0 0 3px; display: grid; }
.meter span { background: linear-gradient(#a1a04a, #3aa18d); }
.taskbar { flex: none; height: 5px; display: flex; background: #0b090a; overflow: hidden; }
.app { width: 31px; margin-left: 322px; background: #333; }
.taskbar time { margin: 2px 48px 0 auto; font-size: 8px; }

/* annotations and watermark */
.notes { position: absolute; z-index: 8; left: 0; top: 0; width: 400px; height: 200px; pointer-events: none; }
.mark { position: absolute; z-index: 7; right: 50px; bottom: 21px; width: 184px; height: 88px; pointer-events: none; }
.bai { font: bold 41px "Liberation Sans", sans-serif; }
.du { font: 600 24px "Noto Sans", sans-serif; fill: #505050; }
.cn { font: bold 30px "Noto Sans CJK SC", sans-serif; }
.url { font: 21px "Noto Sans", sans-serif; }
```
